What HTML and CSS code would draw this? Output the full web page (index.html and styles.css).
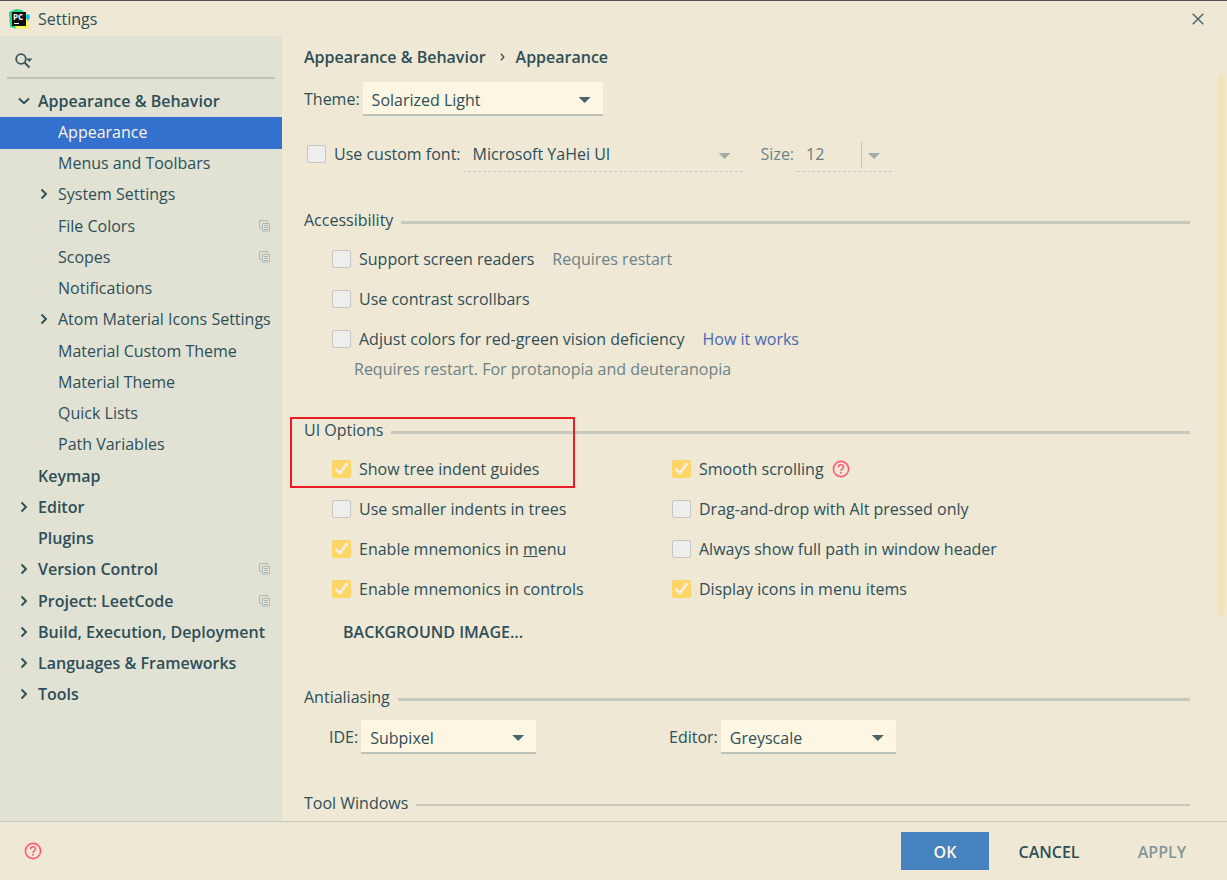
FILE: index.html
```html
<!DOCTYPE html>
<html lang="en">
<head>
<meta charset="utf-8">
<title>Settings</title>
<link rel="stylesheet" href="styles.css">
</head>
<body>
<svg class="defs" aria-hidden="true">
  <symbol id="copy" viewBox="0 0 12 12"><path d="M2.500 8.500H.5v-8h8v2" fill="none" stroke="#adb8b8"/><path d="M3.500 3.500h7v7.500h-7z" fill="#e1e2d3" stroke="#adb8b8"/><path d="M5 5.500h4M5 7.500h4M5 9.500h4" stroke="#adb8b8" fill="none"/></symbol>
  <symbol id="right" viewBox="0 0 8 12"><path d="M1.500 1.500 6 6l-4.500 4.500" fill="none" stroke="#2e4e58" stroke-width="1.900"/></symbol>
  <symbol id="help" viewBox="0 0 18 18"><circle cx="9" cy="9" r="7.600" fill="none" stroke="#ff5c7a" stroke-width="1.600"/><path d="M6.500 7.300c0-3.300 5-3.200 5-.3 0 1.900-2.500 1.900-2.500 4" fill="none" stroke="#ff5c7a" stroke-width="1.600"/><path d="M8.100 12h1.800v1.600H8.100z" fill="#ff5c7a"/></symbol>
</svg>
<header class="titlebar">
  <svg class="logo" viewBox="0 0 22 22" aria-hidden="true">
    <path d="m1 4 7-3 6 1 4 4-2 12-7 3-7-2z" fill="#21d789"/>
    <path d="m15 4 3 3 3-1 1 4-4 5-4-3z" fill="#07c3f2"/>
    <path d="m17 9 2 2 2 8-4 2-4-1-5 1-1-3 10-3z" fill="#fcf84a"/>
    <path d="M4 4h14v14H4z" fill="#111"/>
    <text class="logo-text" x="5" y="12">PC</text>
    <path d="M6 15h5v1H6z" fill="#fff"/>
  </svg>
  <h1 class="window-title">Settings</h1>
  <button class="close" aria-label="Close"><svg viewBox="0 0 12 12"><path d="m.7.7 10.600 10.600M11.300.7.7 11.300" stroke="#4b6870" stroke-width="1.500"/></svg></button>
</header>
<div class="body">
  <aside class="sidebar">
    <label class="search">
      <svg viewBox="0 0 18 16" aria-hidden="true"><circle cx="6" cy="6" r="4.800" fill="none" stroke="#39565f" stroke-width="1.800"/><path d="m9.500 9.500 5 5" stroke="#39565f" stroke-width="2"/><path d="M11 5.500h6.500l-3.200 3.500z" fill="#39565f"/></svg>
      <input class="search-input" type="text" aria-label="Search settings">
    </label>
    <nav class="tree">
      <a class="item top" href="#"><svg class="chev down" viewBox="0 0 12 8"><path d="M1 1.500 6 6.300l5-4.800" fill="none" stroke="#2e4e58" stroke-width="1.900"/></svg>Appearance &amp; Behavior</a>
      <a class="item selected" href="#">Appearance</a>
      <a class="item" href="#">Menus and Toolbars</a>
      <a class="item" href="#"><svg class="chev"><use href="#right"/></svg>System Settings</a>
      <a class="item" href="#">File Colors<svg class="copy"><use href="#copy"/></svg></a>
      <a class="item" href="#">Scopes<svg class="copy"><use href="#copy"/></svg></a>
      <a class="item" href="#">Notifications</a>
      <a class="item" href="#"><svg class="chev"><use href="#right"/></svg>Atom Material Icons Settings</a>
      <a class="item" href="#">Material Custom Theme</a>
      <a class="item" href="#">Material Theme</a>
      <a class="item" href="#">Quick Lists</a>
      <a class="item" href="#">Path Variables</a>
      <a class="item top" href="#">Keymap</a>
      <a class="item top" href="#"><svg class="chev"><use href="#right"/></svg>Editor</a>
      <a class="item top" href="#">Plugins</a>
      <a class="item top" href="#"><svg class="chev"><use href="#right"/></svg>Version Control<svg class="copy"><use href="#copy"/></svg></a>
      <a class="item top" href="#"><svg class="chev"><use href="#right"/></svg>Project: LeetCode<svg class="copy"><use href="#copy"/></svg></a>
      <a class="item top" href="#"><svg class="chev"><use href="#right"/></svg>Build, Execution, Deployment</a>
      <a class="item top" href="#"><svg class="chev"><use href="#right"/></svg>Languages &amp; Frameworks</a>
      <a class="item top" href="#"><svg class="chev"><use href="#right"/></svg>Tools</a>
    </nav>
  </aside>
  <main class="content">
    <div class="crumbs"><span>Appearance &amp; Behavior</span><svg class="crumb-sep" viewBox="0 0 5 8"><path d="m1 .8 2.800 3.200L1 7.200" fill="none" stroke="#2e4e58" stroke-width="1.300"/></svg><span>Appearance</span></div>
    <div class="row theme-row">
      <label for="theme">Theme:</label>
      <span class="combo wide"><select id="theme"><option>Solarized Light</option></select></span>
    </div>
    <div class="row font-row">
      <label class="check"><input type="checkbox"><span>Use custom font:</span></label>
      <span class="combo font off"><select aria-label="Font" disabled><option>Microsoft YaHei UI</option></select></span>
      <label class="size-label muted" for="size">Size:</label>
      <span class="combo size off"><input id="size" type="text" value="12" disabled></span>
    </div>

    <section class="section access">
      <h2 class="heading">Accessibility</h2>
      <div class="options">
        <div class="row"><label class="check"><input type="checkbox"><span>Support screen readers</span></label><span class="note muted">Requires restart</span></div>
        <label class="check"><input type="checkbox"><span>Use contrast scrollbars</span></label>
        <div class="stack">
          <div class="row"><label class="check"><input type="checkbox"><span>Adjust colors for red-green vision deficiency</span></label><a class="note link" href="#">How it works</a></div>
          <div class="hint muted">Requires restart. For protanopia and deuteranopia</div>
        </div>
      </div>
    </section>

    <section class="section ui">
      <h2 class="heading">UI Options</h2>
      <div class="options pairs">
        <label class="check"><input type="checkbox" checked><span>Show tree indent guides</span></label>
        <div class="row"><label class="check"><input type="checkbox" checked><span>Smooth scrolling</span></label><button class="help inline" aria-label="Help"><svg><use href="#help"/></svg></button></div>
        <label class="check"><input type="checkbox"><span>Use smaller indents in trees</span></label>
        <label class="check"><input type="checkbox"><span>Drag-and-drop with Alt pressed only</span></label>
        <label class="check"><input type="checkbox" checked><span>Enable mnemonics in <u>m</u>enu</span></label>
        <label class="check"><input type="checkbox"><span>Always show full path in window header</span></label>
        <label class="check"><input type="checkbox" checked><span>Enable mnemonics in controls</span></label>
        <label class="check"><input type="checkbox" checked><span>Display icons in menu items</span></label>
      </div>
      <button class="background">BACKGROUND IMAGE...</button>
      <div class="annotation"></div>
    </section>

    <section class="section aa">
      <h2 class="heading">Antialiasing</h2>
      <div class="aa-grid">
        <div class="row"><label for="ide">IDE:</label><span class="combo"><select id="ide"><option>Subpixel</option></select></span></div>
        <div class="row"><label for="editor">Editor:</label><span class="combo"><select id="editor"><option>Greyscale</option></select></span></div>
      </div>
    </section>

    <section class="section tools"><h2 class="heading thin">Tool Windows</h2></section>
    <div class="thumb"></div>
  </main>
</div>
<footer class="footer">
  <button class="help" aria-label="Help"><svg><use href="#help"/></svg></button>
  <div class="actions">
    <button class="btn ok">OK</button>
    <button class="btn">CANCEL</button>
    <button class="btn apply" disabled>APPLY</button>
  </div>
</footer>
</body>
</html>
```
FILE: styles.css
```css
* { box-sizing: border-box; }
body {
  margin: 0;
  height: 100vh;
  display: flex;
  flex-direction: column;
  overflow: hidden;
  background: #efe8d5;
  color: #2e4e58;
  font: 16px/24px "Open Sans", "Noto Sans", sans-serif;
}
button, input, select { font: inherit; color: inherit; margin: 0; padding: 0; border: 0; background: none; }
h1, h2 { margin: 0; font-size: 16px; font-weight: 400; white-space: nowrap; }
a { color: inherit; text-decoration: none; }
svg { display: block; flex: none; }
.defs { position: absolute; width: 0; height: 0; }

.titlebar { flex: none; display: flex; align-items: center; height: 36px; border-top: 1px solid #555052; padding: 1px 23px 0 8px; }
.logo { width: 22px; height: 22px; margin-right: 8px; }
.logo-text { font: 700 8px "Open Sans", sans-serif; fill: #fff; }
.close { margin-left: auto; width: 12px; height: 12px; }

.body { flex: 1; display: flex; min-height: 0; }
.sidebar { flex: none; width: 282px; background: #e1e2d3; overflow: hidden; }
.search { display: flex; align-items: center; gap: 6px; height: 43px; margin: 0 7px; padding: 8px 0 0 8px; border-bottom: 2px solid #bbc2b9; }
.search svg { width: 18px; height: 16px; }
.search-input { flex: 1; min-width: 0; outline: 0; }
.tree { display: grid; grid-auto-rows: 1fr; height: 625px; margin-top: 7px; }
.item { display: flex; align-items: center; padding: 0 11px 2px 58px; white-space: nowrap; }
.item.top { padding-left: 38px; font-weight: 600; }
.item.selected { background: #3470cd; color: #fdf6e3; }
.chev { width: 8px; height: 12px; margin: 0 10px 0 -18px; }
.chev.down { width: 12px; height: 8px; margin: 0 8px 0 -20px; }
.copy { width: 12px; height: 12px; margin-left: auto; }

.content { position: relative; flex: 1; min-width: 0; overflow: hidden; padding: 9px 37px 0 22px; white-space: nowrap; }
.crumbs { display: flex; align-items: center; font-weight: 600; }
.crumb-sep { width: 5px; height: 8px; margin: 0 11px 0 14px; }
.row { display: flex; align-items: center; }
.theme-row { margin-top: 13px; gap: 3px; }
.font-row { margin-top: 22px; padding-left: 3px; }
.combo { position: relative; flex: none; width: 175px; height: 34px; background: #fdf6e3; border-bottom: 2px solid #bbc2b9; }
.combo select, .combo input { appearance: none; display: block; width: 100%; height: 32px; padding: 4px 9px 0; opacity: 1; }
.combo::after { content: ""; position: absolute; right: 12px; top: 15px; width: 12px; height: 6px; background: #46636b; clip-path: polygon(0 0, 100% 0, 50% 100%); pointer-events: none; }
.combo.wide { width: 240px; }
.combo.off { background: none; border-bottom: 1px dashed #c9cabe; }
.combo.off::after { background: #a1aca8; }
.combo.off select { padding: 0 10px; }
.combo.font { width: 280px; margin-left: 2px; }
.combo.size { width: 95px; }
.combo.size input { width: 65px; height: 26px; margin-top: 4px; padding: 0 9px 2px; border-right: 1px solid #c5c9be; color: #667f86; }
.font-row .check, .size-label { margin-bottom: 2px; }
.size-label { margin-left: 18px; margin-right: 3px; }
.muted { color: #6b8289; }
.link { color: #4668b0; }

.check { display: flex; align-items: center; gap: 8px; height: 24px; }
.check input { appearance: none; flex: none; width: 19px; height: 18px; margin-bottom: 1px; border: 1px solid #c6c6c1; border-radius: 2px; background: #eee; }
.check input:checked { border-color: #ffd666; background: #ffd666 url("data:image/svg+xml,%3Csvg xmlns='http://www.w3.org/2000/svg' viewBox='0 0 17 16'%3E%3Cpath d='m2.500 8 4.500 4 7.500-10' fill='none' stroke='%23f3eddf' stroke-width='2.800'/%3E%3C/svg%3E") center / 17px 16px no-repeat; }

.heading { display: flex; align-items: center; gap: 8px; height: 24px; }
.heading::after { content: ""; flex: 1; height: 3px; margin-top: 4px; background: #c7c9bd; }
.heading.thin::after { height: 2px; }
.section { position: relative; }
.access { margin-top: 36px; }
.ui { margin-top: 37px; }
.aa { margin-top: 41px; }
.tools { margin-top: 37px; }
.options { display: grid; gap: 16px 0; justify-items: start; margin-top: 15px; padding-left: 28px; }
.pairs { grid-template-columns: 340px 1fr; }
.note { margin-left: 18px; }
.hint { margin-top: 6px; padding-left: 22px; }
.help { width: 18px; height: 18px; }
.help svg { width: 18px; height: 18px; }
.help.inline { margin-left: 8px; }
.background { display: block; margin: 19px 0 0 39px; font-weight: 600; }
.annotation { position: absolute; left: -14px; top: -1px; width: 285px; height: 71px; border: 2px solid #ed1c24; pointer-events: none; }
.aa-grid { display: grid; grid-template-columns: 340px 1fr; margin-top: 11px; padding-left: 25px; }
.aa-grid .row { gap: 3px; }
.thumb { position: absolute; right: 2px; top: 38px; width: 7px; height: 542px; border-radius: 4px; background: #f1e4bd; }

.footer { flex: none; display: flex; align-items: center; justify-content: space-between; height: 59px; border-top: 1px solid #c5c8bc; padding: 0 21px 0 24px; }
.actions { display: flex; gap: 16px; }
.btn { width: 88px; height: 38px; padding-top: 1px; font-weight: 600; }
.btn:disabled { color: #84959a; }
.ok { background: #4682bd; color: #fdf6e3; }
.apply { margin-left: 9px; }
```
